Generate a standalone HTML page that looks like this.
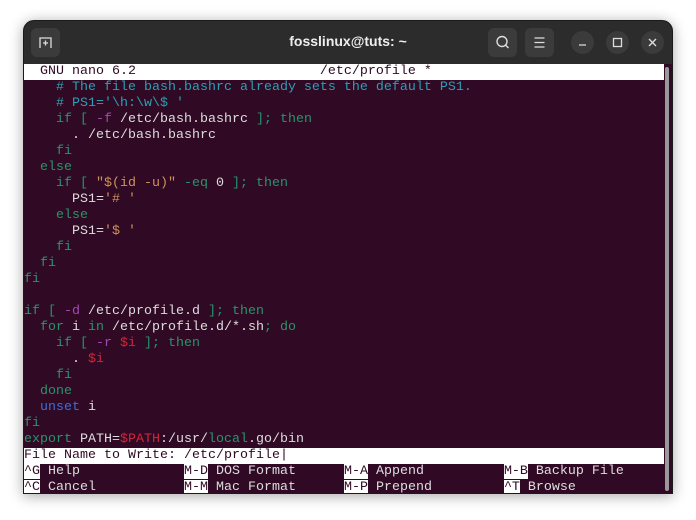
<!DOCTYPE html><html><head><style>
body{margin:0;width:696px;height:520px;background:#fff;overflow:hidden;position:relative;font-family:"Liberation Sans",sans-serif}
.win{position:absolute;left:23px;top:20px;width:650px;height:474px;background:#300a24;border-radius:11px 11px 0 0;box-shadow:0 2px 14px rgba(0,0,0,.35);overflow:hidden;border:1px solid #1a1a1a;box-sizing:border-box}
.tb{position:absolute;left:0;top:0;width:100%;height:43px;background:#2c2c2c}
.title{position:absolute;left:0;width:100%;top:12px;text-align:center;color:#eee;font-weight:bold;font-size:14px}
.btn{position:absolute;top:7px;width:29px;height:29px;background:#3b3b3b;border-radius:6px}
.c{position:absolute;top:10px;width:23px;height:23px;border-radius:50%;background:#3b3b3b}
.term{position:absolute;left:0;top:43px;font-family:"Liberation Mono",monospace;font-size:13.33px;line-height:16px;color:#ddd}
.term div{height:16px;white-space:pre}
.hd{background:#fff;color:#300a24;width:640px}
.cm{color:#2b9fb3}.k{color:#27946a}.p{color:#a347ba}.r{color:#d0263a}.s{color:#d0915a}.b{color:#3d6fd6}
.w{background:#fff;color:#300a24}
.sb{position:absolute;right:3px;top:46px;width:4px;height:424px;background:#999;border-radius:2px}
</style></head><body>
<div class="win">
<div class="tb">
<div class="btn" style="left:7px"><svg width="29" height="29"><path d="M9 20V10h11v10M14.5 12.5v5M12 15h5" stroke="#ddd" stroke-width="1.3" fill="none"/></svg></div>
<div class="title">fosslinux@tuts: ~</div>
<div class="btn" style="left:464px"><svg width="29" height="29"><circle cx="14" cy="13.5" r="5" stroke="#ddd" stroke-width="1.4" fill="none"/><path d="M17.5 17l3 3" stroke="#ddd" stroke-width="1.5"/></svg></div>
<div class="btn" style="left:501px"><svg width="29" height="29"><path d="M9.5 10h10M9.5 14.5h10M9.5 19h10" stroke="#ddd" stroke-width="1.3"/></svg></div>
<div class="c" style="left:547px"><svg width="23" height="23"><path d="M8 14h7" stroke="#ddd" stroke-width="1.3"/></svg></div>
<div class="c" style="left:582px"><svg width="23" height="23"><rect x="7.5" y="7.5" width="8" height="8" stroke="#ddd" stroke-width="1.3" fill="none"/></svg></div>
<div class="c" style="left:617px"><svg width="23" height="23"><path d="M8 8l7 7M15 8l-7 7" stroke="#ddd" stroke-width="1.4"/></svg></div>
</div>
<div class="term"><div class="hd">  GNU nano 6.2                       /etc/profile *</div><div class="cm">    # The file bash.bashrc already sets the default PS1.</div><div class="cm">    # PS1='\h:\w\$ '</div><div>    <span class="k">if [ </span><span class="p">-f</span> /etc/bash.bashrc <span class="k">]; then</span></div><div>      . /etc/bash.bashrc</div><div class="k">    fi</div><div class="k">  else</div><div>    <span class="k">if [ </span><span class="s">"$(id -u)"</span> <span class="k">-eq</span> 0 <span class="k">]; then</span></div><div>      PS1=<span class="s">'# '</span></div><div class="k">    else</div><div>      PS1=<span class="s">'$ '</span></div><div class="k">    fi</div><div class="k">  fi</div><div class="k">fi</div><div> </div><div><span class="k">if [ </span><span class="p">-d</span> /etc/profile.d <span class="k">]; then</span></div><div>  <span class="k">for</span> i <span class="k">in</span> /etc/profile.d/*.sh<span class="k">; do</span></div><div>    <span class="k">if [ </span><span class="p">-r</span> <span class="r">$i</span> <span class="k">]; then</span></div><div>      . <span class="r">$i</span></div><div class="k">    fi</div><div class="k">  done</div><div>  <span class="b">unset</span> i</div><div class="k">fi</div><div><span class="k">export</span> PATH=<span class="r">$PATH</span>:/usr/<span class="k">local</span>.go/bin</div><div class="hd">File Name to Write: /etc/profile|</div><div><span class="w">^G</span> Help             <span class="w">M-D</span> DOS Format      <span class="w">M-A</span> Append          <span class="w">M-B</span> Backup File</div><div><span class="w">^C</span> Cancel           <span class="w">M-M</span> Mac Format      <span class="w">M-P</span> Prepend         <span class="w">^T</span> Browse</div></div>
<div class="sb"></div>
</div>
</body></html>
